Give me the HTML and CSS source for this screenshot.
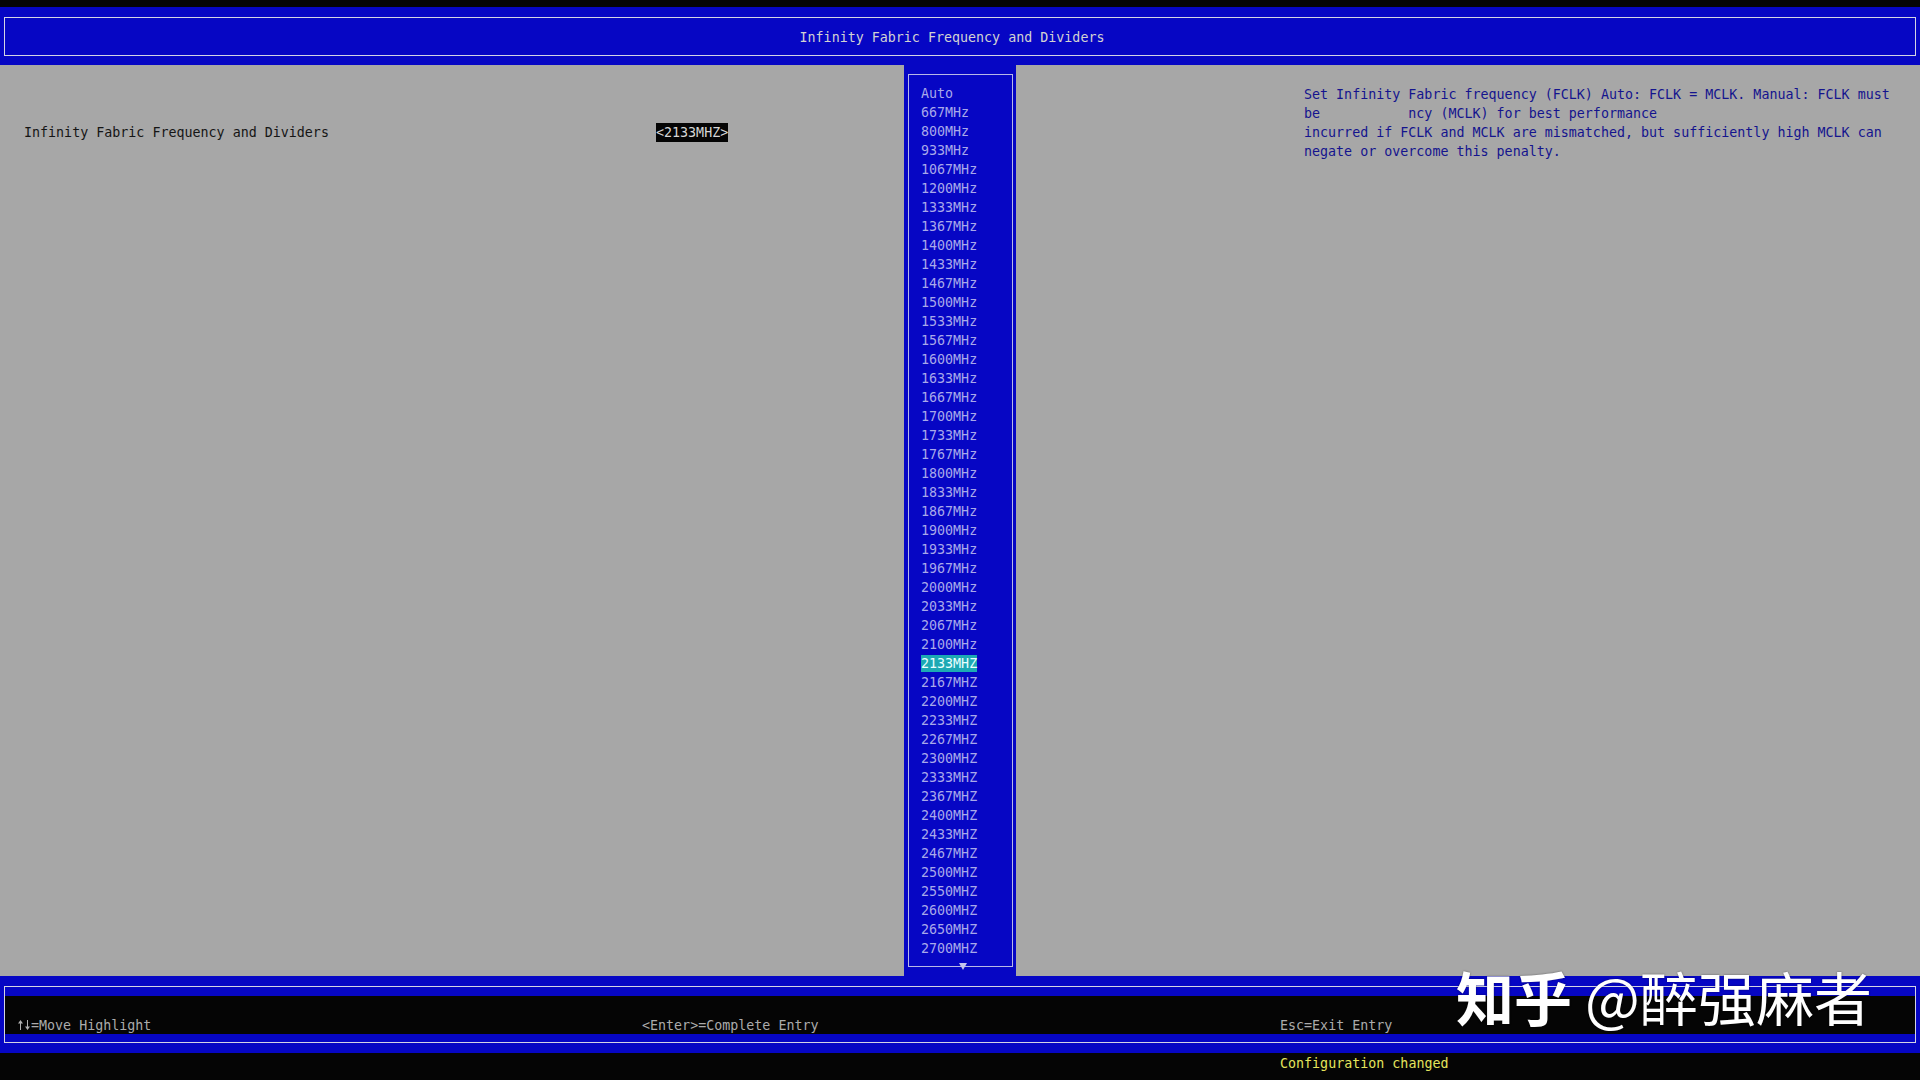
FILE: index.html
```html
<!DOCTYPE html>
<html lang="en">
<head>
  <meta charset="UTF-8">
  <title>Infinity Fabric Frequency and Dividers</title>
  <link rel="stylesheet" href="styles.css">
</head>
<body>
  <div class="screen">
    <div class="top-strip"></div>

    <div class="header">
      <div class="title-box">Infinity Fabric Frequency and Dividers</div>
    </div>

    <div class="main">
      <div class="left-panel">
        <div class="setting-row">
          <span class="setting-label">Infinity Fabric Frequency and Dividers</span>
          <span class="setting-value">&lt;2133MHZ&gt;</span>
        </div>
      </div>

      <div class="popup">
        <div class="popup-frame">
          <ul class="options">
            <li>Auto</li>
            <li>667MHz</li>
            <li>800MHz</li>
            <li>933MHz</li>
            <li>1067MHz</li>
            <li>1200MHz</li>
            <li>1333MHz</li>
            <li>1367MHz</li>
            <li>1400MHz</li>
            <li>1433MHz</li>
            <li>1467MHz</li>
            <li>1500MHz</li>
            <li>1533MHz</li>
            <li>1567MHz</li>
            <li>1600MHz</li>
            <li>1633MHz</li>
            <li>1667MHz</li>
            <li>1700MHz</li>
            <li>1733MHz</li>
            <li>1767MHz</li>
            <li>1800MHz</li>
            <li>1833MHz</li>
            <li>1867MHz</li>
            <li>1900MHz</li>
            <li>1933MHz</li>
            <li>1967MHz</li>
            <li>2000MHz</li>
            <li>2033MHz</li>
            <li>2067MHz</li>
            <li>2100MHz</li>
            <li><span class="selected">2133MHZ</span></li>
            <li>2167MHZ</li>
            <li>2200MHZ</li>
            <li>2233MHZ</li>
            <li>2267MHZ</li>
            <li>2300MHZ</li>
            <li>2333MHZ</li>
            <li>2367MHZ</li>
            <li>2400MHZ</li>
            <li>2433MHZ</li>
            <li>2467MHZ</li>
            <li>2500MHZ</li>
            <li>2550MHZ</li>
            <li>2600MHZ</li>
            <li>2650MHZ</li>
            <li>2700MHZ</li>
          </ul>
          <div class="scroll-arrow"></div>
        </div>
      </div>

      <div class="right-panel">
        <div class="help-text">Set Infinity Fabric frequency (FCLK) Auto: FCLK = MCLK. Manual: FCLK must
be           ncy (MCLK) for best performance
incurred if FCLK and MCLK are mismatched, but sufficiently high MCLK can
negate or overcome this penalty.</div>
      </div>
    </div>

    <div class="footer">
      <div class="keys-box">
        <div class="keys">
          <span class="key">
            <svg class="arrows" width="14" height="12" viewBox="0 0 14 12">
              <path d="M3.5 1 L1 4.5 H3 V11 H4 V4.5 H6 Z" fill="#b0b0b0"/>
              <path d="M10.5 11 L8 7.5 H10 V1 H11 V7.5 H13 Z" fill="#b0b0b0"/>
            </svg>=Move Highlight
          </span>
          <span class="key">&lt;Enter&gt;=Complete Entry</span>
          <span class="key">Esc=Exit Entry</span>
        </div>
      </div>
    </div>

    <div class="status">Configuration changed</div>

    <div class="watermark"><b>知乎</b> @醉强麻者</div>
  </div>
</body>
</html>
```

FILE: styles.css
```css
body {
  margin: 0;
  background: #000;
  font-family: "DejaVu Sans Mono", "Liberation Mono", monospace;
  font-size: 13.33px;
  line-height: 19px;
}
.screen {
  position: relative;
  width: 1920px;
  height: 1080px;
  display: flex;
  flex-direction: column;
  overflow: hidden;
}
.top-strip {
  height: 7px;
  background: #050505;
}
.header {
  background: #0606c4;
  padding: 10px 4px 9px;
}
.title-box {
  border: 1px solid #d4d4e4;
  height: 36px;
  line-height: 37px;
  padding: 1px 16px 0 0;
  text-align: center;
  color: #d2d2d2;
}
.main {
  display: flex;
  height: 911px;
}
.left-panel {
  width: 904px;
  background: #a7a7a7;
  padding: 58px 0 0 24px;
  box-sizing: border-box;
}
.setting-row {
  display: grid;
  grid-template-columns: 632px auto;
  justify-content: start;
}
.setting-label {
  color: #151515;
}
.setting-value {
  background: #050505;
  color: #d6d6d6;
}
.popup {
  width: 112px;
  background: #0606c4;
  padding: 9px 3px 9px 4px;
  box-sizing: border-box;
}
.popup-frame {
  position: relative;
  height: 100%;
  box-sizing: border-box;
  border: 1px solid #b8b8e6;
}
.options {
  list-style: none;
  margin: 0;
  padding: 9px 0 0 12px;
  color: #a9a9ea;
}
.selected {
  background: #1ca9b4;
  color: #eaffff;
  display: inline-block;
  line-height: 17px;
  margin: 1px 0;
}
.scroll-arrow {
  position: absolute;
  left: 50px;
  bottom: -4px;
  width: 0;
  height: 0;
  border-left: 4px solid transparent;
  border-right: 4px solid transparent;
  border-top: 7px solid #c4c4ec;
}
.right-panel {
  flex: 1;
  background: #a7a7a7;
  padding: 20px 0 0 288px;
}
.help-text {
  white-space: pre;
  color: #14148e;
}
.footer {
  background: #0606c4;
  padding: 10px 4px;
}
.keys-box {
  border: 1px solid #d4d4e4;
  padding: 9px 0 8px;
}
.keys {
  background: #050505;
  height: 38px;
  box-sizing: border-box;
  padding: 20px 0 0 12px;
  display: grid;
  grid-template-columns: 625px 638px 1fr;
  color: #ababab;
}
.arrows {
  vertical-align: -1px;
}
.status {
  flex: 1;
  background: #050505;
  color: #e4e45c;
  padding: 1px 0 0 1280px;
}
.watermark {
  position: absolute;
  left: 1456px;
  top: 956px;
  font-family: "Noto Sans CJK SC", sans-serif;
  font-size: 58px;
  line-height: 80px;
  color: #fff;
  text-shadow: 0 0 2px rgba(0,0,0,0.5);
  white-space: nowrap;
}
.watermark b {
  font-weight: 700;
}
```
